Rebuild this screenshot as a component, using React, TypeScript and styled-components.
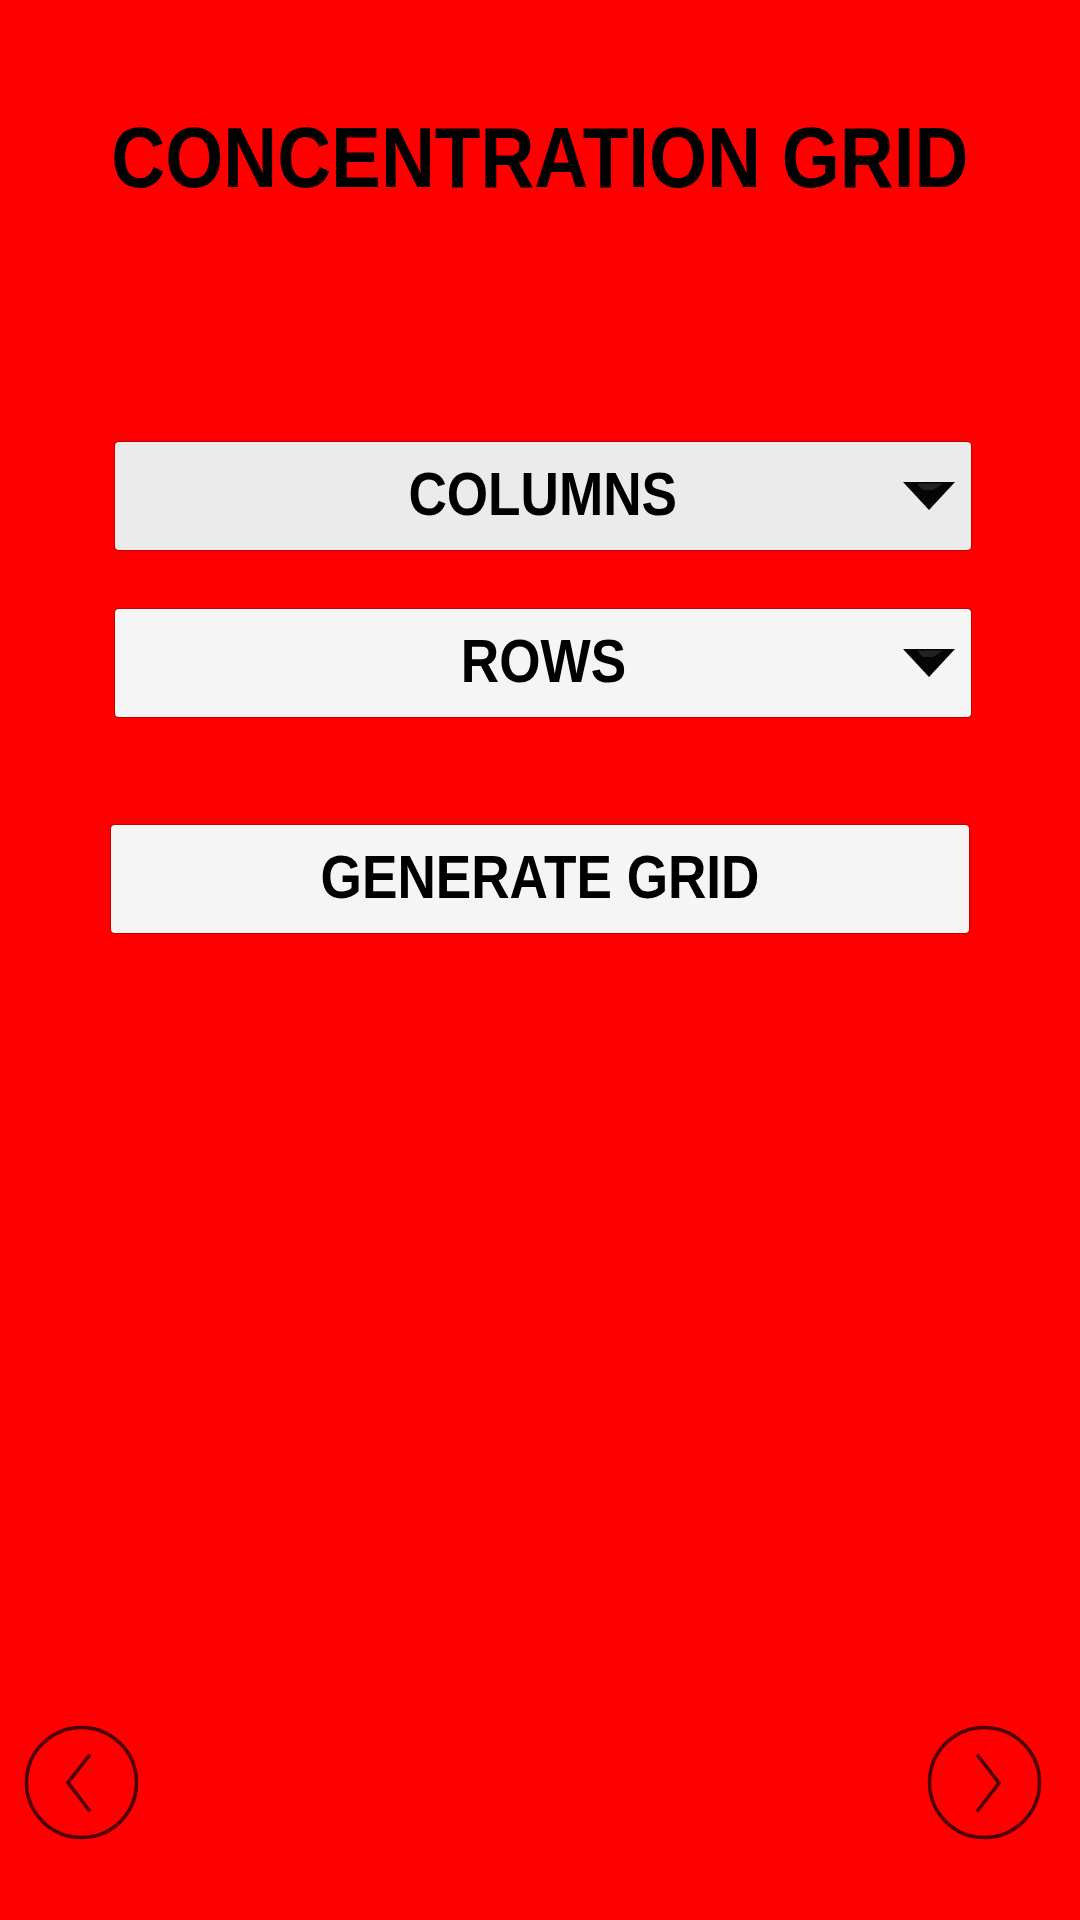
import React from "react";
import styled, { createGlobalStyle } from "styled-components";

const Global = createGlobalStyle`
  html, body { margin: 0; padding: 0; background: #ff0000; }
  body { font-family: "Liberation Sans", Arial, sans-serif; }
`;

const Page = styled.div`
  width: 1080px;
  min-height: 1920px;
  background: #ff0000;
  display: flex;
  flex-direction: column;
  padding-top: 115px;
  box-sizing: border-box;
`;

const Title = styled.h1`
  margin: 0;
  font-family: "Liberation Sans", Arial, sans-serif;
  font-weight: 700;
  font-size: 85.5px;
  line-height: 85px;
  color: #000;
  text-align: center;
  white-space: nowrap;
  span {
    display: inline-block;
    transform: scaleX(0.873);
  }
`;

const Form = styled.div`
  display: flex;
  flex-direction: column;
  margin-top: 242px;
`;

const Field = styled.div<{ $bg: string; $gap: number }>`
  box-sizing: border-box;
  margin-left: 115px;
  margin-top: ${(p) => p.$gap}px;
  width: 856px;
  height: 108px;
  background: ${(p) => p.$bg};
  border-radius: 4px;
  box-shadow: 0 0 0 1px rgba(110, 0, 0, 0.4);
  display: grid;
  grid-template-columns: 1fr auto 1fr;
  align-items: center;
  padding-bottom: 4px;
`;

const Label = styled.div`
  grid-column: 2;
  font-family: "Liberation Sans", Arial, sans-serif;
  font-weight: 700;
  font-size: 62px;
  line-height: 62px;
  color: #000;
  white-space: nowrap;
  transform: scaleX(0.857);
`;

const Arrow = styled.svg`
  grid-column: 3;
  justify-self: end;
  margin-right: 16px;
  margin-top: 4px;
  width: 52px;
  height: 28px;
  display: block;
`;

const GenerateButton = styled.button`
  box-sizing: border-box;
  margin: 108px 0 0 111px;
  width: 858px;
  height: 108px;
  background: #f5f5f5;
  border: none;
  border-radius: 4px;
  box-shadow: 0 0 0 1px rgba(110, 0, 0, 0.4);
  display: flex;
  align-items: center;
  justify-content: center;
  padding: 0 0 4px 0;
  cursor: pointer;
`;

const Footer = styled.div`
  margin-top: auto;
  display: flex;
  justify-content: space-between;
  padding: 0 38px 80px 24px;
`;

const NavIcon = styled.svg`
  width: 115px;
  height: 115px;
  display: block;
`;

const DropArrow = () => (
  <Arrow viewBox="0 0 52 28">
    <polygon points="0,0 52,0 26,28" fill="#050505" />
    <polygon points="14,1.5 40,1.5 30,8 20,8" fill="#3a3a3a" opacity="0.55" />
  </Arrow>
);

const Nav = ({ dir }: { dir: "left" | "right" }) => (
  <NavIcon viewBox="0 0 115 115">
    <circle cx="57.5" cy="57.5" r="55" fill="none" stroke="#4a0000" strokeWidth="3.5" />
    {dir === "left" ? (
      <polyline points="66,29.5 44,57.5 66,86.5" fill="none" stroke="#4a0000" strokeWidth="3.5" />
    ) : (
      <polyline points="50,29.5 72,58 50,86.5" fill="none" stroke="#4a0000" strokeWidth="3.5" />
    )}
  </NavIcon>
);

export default function App() {
  return (
    <>
      <Global />
      <Page>
        <Title>
          <span>CONCENTRATION GRID</span>
        </Title>
        <Form>
          <Field $bg="#ebebeb" $gap={0}>
            <Label>COLUMNS</Label>
            <DropArrow />
          </Field>
          <Field $bg="#f5f5f5" $gap={59}>
            <Label>ROWS</Label>
            <DropArrow />
          </Field>
          <GenerateButton>
            <Label>GENERATE GRID</Label>
          </GenerateButton>
        </Form>
        <Footer>
          <Nav dir="left" />
          <Nav dir="right" />
        </Footer>
      </Page>
    </>
  );
}
